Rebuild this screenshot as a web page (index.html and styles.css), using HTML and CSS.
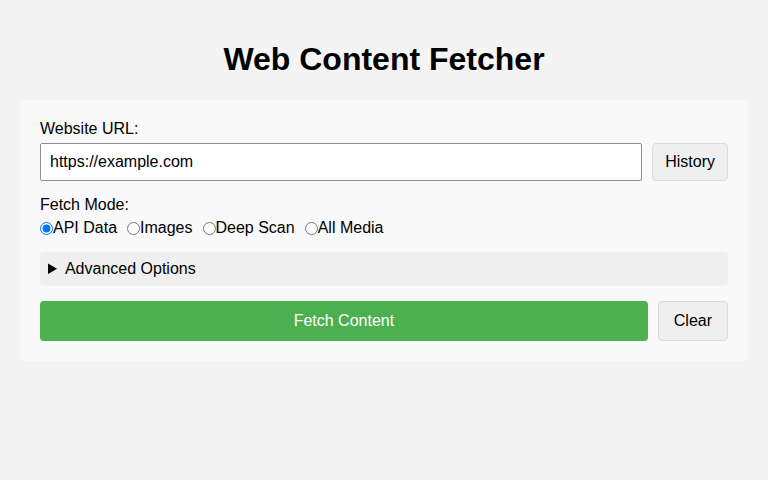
FILE: index.html
```html
<!DOCTYPE html>
<html>
<head>
<meta charset="utf-8">
<link rel="stylesheet" href="styles.css">
</head>
<body>
<h1 class="title">Web Content Fetcher</h1>
<div class="card">
  <label class="field-label" for="url">Website URL:</label>
  <div class="url-row">
    <input id="url" class="url-input" type="text" value="https://example.com">
    <button class="btn btn-light btn-history">History</button>
  </div>
  <div class="field-label mode-label">Fetch Mode:</div>
  <div class="radios">
    <label class="radio"><input type="radio" name="mode" checked>API Data</label>
    <label class="radio"><input type="radio" name="mode">Images</label>
    <label class="radio"><input type="radio" name="mode">Deep Scan</label>
    <label class="radio"><input type="radio" name="mode">All Media</label>
  </div>
  <details class="advanced">
    <summary>Advanced Options</summary>
  </details>
  <div class="actions">
    <button class="btn btn-primary">Fetch Content</button>
    <button class="btn btn-light btn-clear">Clear</button>
  </div>
</div>
</body>
</html>
```
FILE: styles.css
```css
* { box-sizing: border-box; }
body {
  margin: 0;
  padding: 20px;
  background: #f4f4f4;
  font-family: "Liberation Sans", Arial, sans-serif;
  font-size: 16px;
  color: #000;
}
.title {
  text-align: center;
  font-size: 32px;
  font-weight: bold;
  margin: 21px 0 22px;
  line-height: 37px;
}
.card {
  background: #f9f9f9;
  padding: 20px;
  border-radius: 4px;
}
.field-label {
  display: block;
  line-height: 18px;
  margin-bottom: 5px;
}
.url-row {
  display: flex;
  gap: 10px;
}
.url-input {
  flex: 1;
  height: 38px;
  padding: 0 9px;
  border: 1px solid #8f8f8f;
  border-radius: 2px;
  font: inherit;
  background: #fff;
  color: #000;
}
.btn {
  font: inherit;
  border-radius: 4px;
  cursor: pointer;
}
.btn-light {
  background: #efefef;
  border: 1px solid #dcdcdc;
  color: #000;
}
.btn-history {
  height: 38px;
  padding: 0 12px;
}
.mode-label {
  margin-top: 15px;
  margin-bottom: 5px;
}
.radios {
  display: flex;
  gap: 10px;
  line-height: 18px;
}
.radio {
  display: flex;
  align-items: center;
}
.radio input {
  margin: 0;
  width: 13px;
  height: 13px;
}
.advanced {
  margin-top: 15px;
  background: #efefef;
  border-radius: 4px;
}
.advanced summary {
  padding: 8px;
  line-height: 18px;
  cursor: pointer;
}
.actions {
  display: flex;
  gap: 10px;
  margin-top: 15px;
}
.btn-primary {
  flex: 1;
  height: 40px;
  background: #4caf50;
  color: #fff;
  border: none;
}
.btn-clear {
  height: 40px;
  padding: 0 15px;
}
```
